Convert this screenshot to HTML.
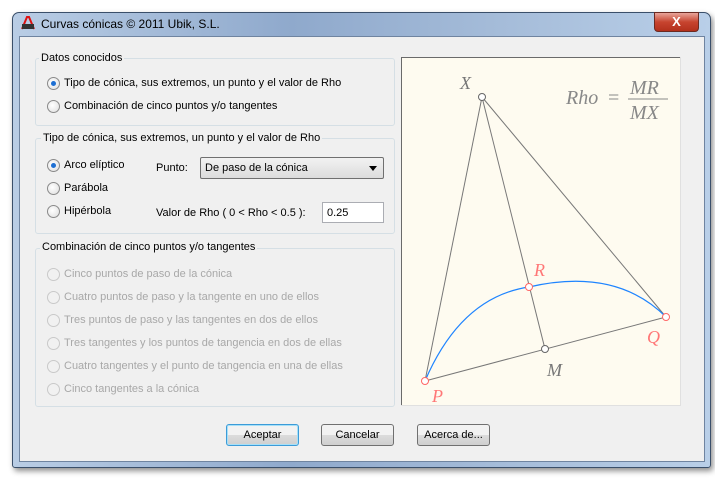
<!DOCTYPE html><html><head><style>
body{margin:0;width:715px;height:479px;background:#fff;position:relative;font-family:"Liberation Sans",sans-serif;font-size:11px;color:#000;overflow:hidden}
.a{position:absolute}
.win{left:12px;top:12px;width:697px;height:454px;border:1px solid #3a4f6a;border-radius:7px 7px 3px 3px;background:linear-gradient(90deg,#b9cde5,#8fa9cc 40%,#a5bcd9 70%,#b9cfe8);box-shadow:2px 3px 6px rgba(0,0,0,.45)}
.client{left:19px;top:36px;width:684px;height:424px;background:#f0f0f0;border:1px solid #6f84a0}
.grp{position:absolute;border:1px solid #d5dfe5;border-radius:3px}
.lbl{position:absolute;background:#f0f0f0;padding:0 2px;white-space:nowrap}
.r{position:absolute;width:11px;height:11px;border-radius:50%;border:1px solid #8a8a8a;background:radial-gradient(circle at 40% 40%,#fff,#ddd)}
.r.on::after{content:"";position:absolute;left:3px;top:3px;width:5px;height:5px;border-radius:50%;background:#1d6fd3}
.r.dis{border-color:#c9c9c9;background:#f1f1f1}
.t{position:absolute;white-space:nowrap;margin-top:1px}
.g{color:#a8a8a8}
.btn{position:absolute;top:424px;width:71px;height:20px;border:1px solid #707070;border-radius:3px;background:linear-gradient(#f2f2f2 50%,#dcdcdc 50%,#cfcfcf);text-align:center;line-height:20px}
</style></head><body>
<div class="a win"></div>
<svg class="a" style="left:21px;top:16px" width="14" height="14"><path d="M1 13L6 1h2l5 12" fill="none" stroke="#d11" stroke-width="2"/><rect x="1" y="8" width="12" height="5" fill="#333"/></svg>
<div class="a" style="left:41px;top:17px;font-size:12px">Curvas cónicas © 2011 Ubik, S.L.</div>
<div class="a" style="left:654px;top:12px;width:43px;height:18px;border:1px solid #6b2a22;border-radius:0 0 4px 4px;background:linear-gradient(#e8a49a,#c7442f 50%,#b3301c);color:#fff;font-weight:bold;text-align:center;line-height:17px;font-size:13px">X</div>
<div class="a client"></div>
<div class="grp" style="left:35px;top:58px;width:358px;height:66px"></div>
<div class="lbl" style="left:39px;top:52px">Datos conocidos</div>
<div class="r on" style="left:47px;top:77px"></div><div class="t" style="left:64px;top:76px">Tipo de cónica, sus extremos, un punto y el valor de Rho</div>
<div class="r" style="left:47px;top:100px"></div><div class="t" style="left:64px;top:99px">Combinación de cinco puntos y/o tangentes</div>
<div class="grp" style="left:35px;top:138px;width:358px;height:94px"></div>
<div class="lbl" style="left:41px;top:132px">Tipo de cónica, sus extremos, un punto y el valor de Rho</div>
<div class="r on" style="left:47px;top:159px"></div><div class="t" style="left:64px;top:158px">Arco elíptico</div>
<div class="r" style="left:47px;top:182px"></div><div class="t" style="left:64px;top:181px">Parábola</div>
<div class="r" style="left:47px;top:205px"></div><div class="t" style="left:64px;top:204px">Hipérbola</div>
<div class="t" style="left:156px;top:161px">Punto:</div>
<div class="a" style="left:200px;top:157px;width:182px;height:20px;border:1px solid #707070;border-radius:2px;background:linear-gradient(#f2f2f2,#dcdcdc)"><span style="position:absolute;left:4px;top:4px">De paso de la cónica</span><span style="position:absolute;right:6px;top:8px;border:4px solid transparent;border-top:5px solid #000"></span></div>
<div class="t" style="left:156px;top:206px">Valor de Rho ( 0 &lt; Rho &lt; 0.5 ):</div>
<div class="a" style="left:322px;top:202px;width:60px;height:19px;border:1px solid #abadb3;background:#fff"><span style="position:absolute;left:4px;top:4px">0.25</span></div>
<div class="grp" style="left:35px;top:248px;width:358px;height:157px"></div>
<div class="lbl" style="left:40px;top:241px">Combinación de cinco puntos y/o tangentes</div>
<div class="r dis" style="left:47px;top:268px"></div><div class="t g" style="left:64px;top:267px">Cinco puntos de paso de la cónica</div>
<div class="r dis" style="left:47px;top:291px"></div><div class="t g" style="left:64px;top:290px">Cuatro puntos de paso y la tangente en uno de ellos</div>
<div class="r dis" style="left:47px;top:314px"></div><div class="t g" style="left:64px;top:313px">Tres puntos de paso y las tangentes en dos de ellos</div>
<div class="r dis" style="left:47px;top:337px"></div><div class="t g" style="left:64px;top:336px">Tres tangentes y los puntos de tangencia en dos de ellas</div>
<div class="r dis" style="left:47px;top:360px"></div><div class="t g" style="left:64px;top:359px">Cuatro tangentes y el punto de tangencia en una de ellas</div>
<div class="r dis" style="left:47px;top:383px"></div><div class="t g" style="left:64px;top:382px">Cinco tangentes a la cónica</div>
<svg class="a" style="left:401px;top:57px" width="280" height="349">
<rect x="0.5" y="0.5" width="279" height="348" fill="#fefbf0" stroke="#e0e0e0"/>
<path d="M0.5 348V0.5H279" fill="none" stroke="#6a6a6a"/>
<g stroke="#777" stroke-width="1" fill="none">
<line x1="81" y1="40" x2="24" y2="324"/><line x1="81" y1="40" x2="144" y2="292"/><line x1="81" y1="40" x2="265" y2="260"/><line x1="24" y1="324" x2="265" y2="260"/>
</g>
<path d="M24 324Q60 240 128 230Q215 210 265 260" fill="none" stroke="#1e84ff" stroke-width="1.2"/>
<g fill="#fff" stroke-width="1"><circle cx="81" cy="40" r="3.5" stroke="#666"/><circle cx="144" cy="292" r="3.5" stroke="#666"/><circle cx="128" cy="230" r="3.5" stroke="#f66"/><circle cx="24" cy="324" r="3.5" stroke="#f66"/><circle cx="265" cy="260" r="3.5" stroke="#f66"/></g>
<g font-family="Liberation Serif,serif" font-style="italic" font-size="18">
<text x="59" y="32" fill="#777">X</text><text x="146" y="319" fill="#777">M</text>
<text x="133" y="219" fill="#f77">R</text><text x="31" y="345" fill="#f77">P</text><text x="246" y="286" fill="#f77">Q</text>
<text x="165" y="47" fill="#888" font-size="20">Rho</text><text x="207" y="47" fill="#888" font-style="normal" font-size="20">=</text>
<text x="229" y="37" fill="#888" font-size="20">MR</text><text x="229" y="62" fill="#888" font-size="20">MX</text>
</g>
<line x1="227" y1="42" x2="267" y2="42" stroke="#888"/>
</svg>
<div class="btn" style="left:226px;border-color:#3c9bd8;box-shadow:inset 0 0 0 1px #a6e0f8">Aceptar</div>
<div class="btn" style="left:321px">Cancelar</div>
<div class="btn" style="left:417px">Acerca de...</div>
</body></html>
